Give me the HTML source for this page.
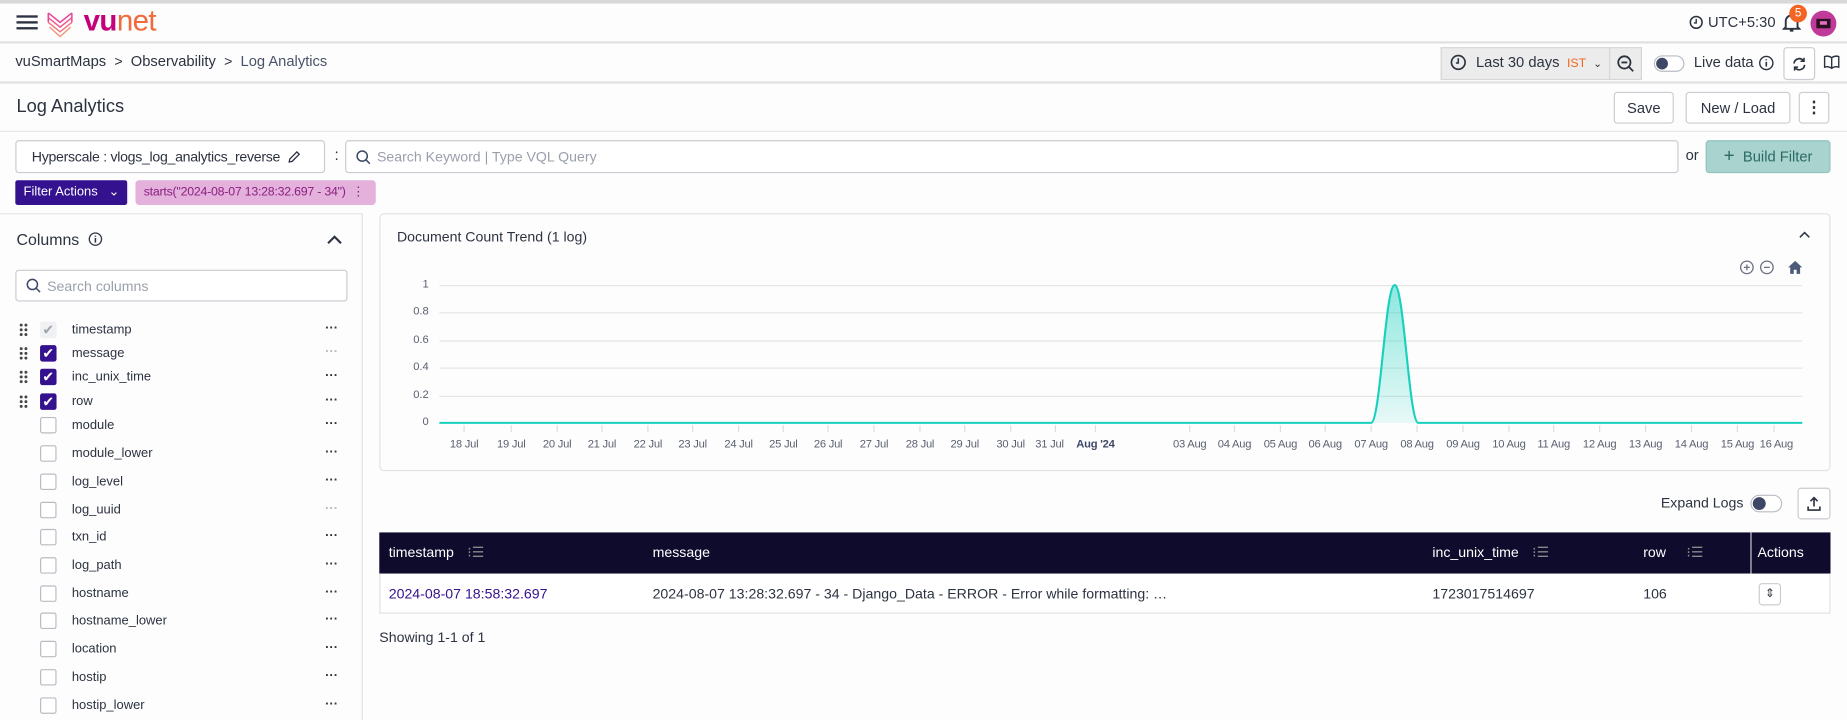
<!DOCTYPE html>
<html><head><meta charset="utf-8"><style>
*{box-sizing:border-box;margin:0;padding:0}
html,body{width:1847px;height:716px;overflow:hidden;background:#fdfdfd}
#s{position:absolute;left:0;top:0;width:1568px;height:608px;transform:scale(1.17793);transform-origin:0 0;font-family:"Liberation Sans",sans-serif;color:#2c3340;font-size:12px;white-space:nowrap}
.a{position:absolute}
.btn{position:absolute;border:1px solid #c9ccd1;border-radius:3px;background:#fff;display:flex;align-items:center;justify-content:center;font-size:12.5px;color:#2c3340;white-space:nowrap}
.cb{position:absolute;left:34px;width:14px;height:14px;border:1px solid #b7bcc4;border-radius:2px;background:#fff}
.cb.on{background:#34118f;border-color:#34118f}
.lbl{position:absolute;left:61px;font-size:11px;color:#2c3340}
.dots{position:absolute;left:276px;font-size:11px;font-weight:bold;color:#333;line-height:6px}
.drag{position:absolute;left:16px;width:8px;height:12px;background:radial-gradient(circle,#444 1.2px,transparent 1.4px) 0 0/4px 4px}
.xl{position:absolute;top:372px;font-size:9.5px;color:#5a6070;transform:translateX(-50%);white-space:nowrap;letter-spacing:-0.2px}
.yl{position:absolute;left:340px;width:24px;text-align:right;font-size:9.5px;color:#5a6070}
.th{position:absolute;top:462px;color:#fff;font-size:12px}
</style></head><body><div id="s">
<div class="a" style="left:0;top:0;width:1568px;height:3px;background:#d8d8d8"></div>
<div class="a" style="left:14px;top:13px;width:18px;height:2px;background:#2c3340;box-shadow:0 5px 0 #2c3340,0 10px 0 #2c3340"></div>
<svg class="a" style="left:40px;top:9px" width="22" height="24" viewBox="0 0 22 24"><g fill="none" stroke-width="1.3"><path d="M1 2 L11 10 L21 2" stroke="#e8479a"/><path d="M1 6 L11 14 L21 6" stroke="#ec5f8f"/><path d="M1 10 L11 18 L21 10" stroke="#f07a86"/><path d="M2 14 L11 22 L20 14" stroke="#f29a80"/><path d="M1 2 V10 M21 2 V10" stroke="#e8479a"/></g></svg>
<div class="a" style="left:71px;top:4px;font-size:25px;font-weight:bold;letter-spacing:-0.5px"><span style="color:#c4007a">vu</span><span style="color:#f06a3c;font-weight:normal">net</span></div>
<svg class="a" style="left:1434px;top:13px" width="12" height="12" viewBox="0 0 12 12"><circle cx="6" cy="6" r="5" fill="none" stroke="#2c3340" stroke-width="1.3"/><path d="M6 3V6.5H4" fill="none" stroke="#2c3340" stroke-width="1.2"/></svg>
<div class="a" style="left:1450px;top:12px;font-size:12.5px">UTC+5:30</div>
<svg class="a" style="left:1513px;top:10px" width="16" height="18" viewBox="0 0 16 18"><path d="M3 13V8a5 5 0 0 1 10 0v5l1.5 1.5h-13z M6.5 16h3" fill="none" stroke="#2c3340" stroke-width="1.6"/></svg>
<div class="a" style="left:1519px;top:4px;width:15px;height:15px;border-radius:50%;background:#f26522;color:#fff;font-size:10px;text-align:center;line-height:15px">5</div>
<div class="a" style="left:1537px;top:9px;width:22px;height:22px;border-radius:50%;background:#c03a9a;overflow:hidden"><div class="a" style="left:5px;top:7px;width:12px;height:8px;background:#2a1020"></div><div class="a" style="left:8px;top:9px;width:6px;height:3px;background:#e070c0"></div></div>
<div class="a" style="left:0;top:35px;width:1568px;height:2px;background:#e2e2e2"></div>
<div class="a" style="left:13px;top:45px;font-size:12.5px;color:#2c3340">vuSmartMaps&nbsp;&nbsp;<span style="font-size:12px">&gt;</span>&nbsp;&nbsp;Observability&nbsp;&nbsp;<span style="font-size:12px">&gt;</span>&nbsp;&nbsp;<span style="color:#4a5468">Log Analytics</span></div>
<div class="a" style="left:1223px;top:40px;width:143px;height:28px;background:#ececec;border:1px solid #d6d6d6;border-right:none"></div>
<div class="a" style="left:1366px;top:40px;width:28px;height:28px;background:#ececec;border:1px solid #d6d6d6"></div>
<svg class="a" style="left:1231px;top:46px" width="14" height="14" viewBox="0 0 14 14"><circle cx="7" cy="7" r="5.8" fill="none" stroke="#2c3340" stroke-width="1.4"/><path d="M7 3.5V7.5H5" fill="none" stroke="#2c3340" stroke-width="1.3"/></svg>
<div class="a" style="left:1253px;top:46px;font-size:12.5px">Last 30 days <span style="color:#f26522;font-size:10.5px">&nbsp;IST</span> <span style="font-size:9px">&nbsp;⌄</span></div>
<svg class="a" style="left:1372px;top:46px" width="16" height="16" viewBox="0 0 16 16"><circle cx="7" cy="7" r="5.2" fill="none" stroke="#2c3340" stroke-width="1.5"/><path d="M4.5 7h5M11 11l3.5 3.5" stroke="#2c3340" stroke-width="1.5"/></svg>
<div class="a" style="left:1404px;top:47px;width:26px;height:14px;border-radius:7px;border:1px solid #b8bcc4;background:#fff"></div>
<div class="a" style="left:1406px;top:49px;width:10px;height:10px;border-radius:50%;background:#3e4866"></div>
<div class="a" style="left:1438px;top:46px;font-size:12.5px">Live data</div>
<svg class="a" style="left:1493px;top:47px" width="13" height="13" viewBox="0 0 13 13"><circle cx="6.5" cy="6.5" r="5.6" fill="none" stroke="#2c3340" stroke-width="1.2"/><path d="M6.5 5.5v4M6.5 3.3v1" stroke="#2c3340" stroke-width="1.4"/></svg>
<div class="btn" style="left:1514px;top:40px;width:27px;height:28px"><svg width="13" height="13" viewBox="0 0 13 13"><path d="M2 6a4.5 4.5 0 0 1 8-2.5M11 7a4.5 4.5 0 0 1-8 2.5" fill="none" stroke="#2c3340" stroke-width="1.4"/><path d="M10.5 1v3h-3M2.5 12V9h3" fill="none" stroke="#2c3340" stroke-width="1.3"/></svg></div>
<svg class="a" style="left:1548px;top:46px" width="14" height="14" viewBox="0 0 14 14"><path d="M7 3C5 1.5 2.5 1.5 1 2v9c1.5-.5 4-.5 6 1 2-1.5 4.5-1.5 6-1V2c-1.5-.5-4-.5-6 1zM7 3v9" fill="none" stroke="#2c3340" stroke-width="1.2"/></svg>
<div class="a" style="left:0;top:69px;width:1568px;height:2px;background:#e2e2e2"></div>
<div class="a" style="left:14px;top:82px;font-size:15.5px;color:#2c3340">Log Analytics</div>
<div class="btn" style="left:1370px;top:78px;width:51px;height:27px">Save</div>
<div class="btn" style="left:1431px;top:78px;width:89px;height:27px">New / Load</div>
<div class="btn" style="left:1527px;top:78px;width:26px;height:27px;font-weight:bold;font-size:14px">⋮</div>
<div class="a" style="left:0;top:111px;width:1568px;height:1px;background:#e6e6e6"></div>
<div class="btn" style="left:13px;top:119px;width:263px;height:28px;justify-content:flex-start;padding-left:13px;font-size:12px;letter-spacing:-0.25px">Hyperscale : vlogs_log_analytics_reverse&nbsp;&nbsp;<svg width="11" height="11" viewBox="0 0 11 11"><path d="M1.5 9.5l.5-2.5 6-6 2 2-6 6z" fill="none" stroke="#2c3340" stroke-width="1.1"/></svg></div>
<div class="a" style="left:284px;top:124px;font-size:13px">:</div>
<div class="btn" style="left:293px;top:119px;width:1132px;height:28px;justify-content:flex-start;padding-left:8px;color:#9aa0ab;font-size:12px"><svg width="13" height="13" viewBox="0 0 13 13" style="margin-right:5px"><circle cx="5.5" cy="5.5" r="4.3" fill="none" stroke="#3e4866" stroke-width="1.3"/><path d="M8.7 8.7L12 12" stroke="#3e4866" stroke-width="1.3"/></svg>Search Keyword | Type VQL Query</div>
<div class="a" style="left:1431px;top:125px;font-size:12.5px">or</div>
<div class="a" style="left:1448px;top:119px;width:106px;height:28px;background:#a9d3ce;border:1px solid #8fc3bd;border-radius:3px;color:#2a6a62;font-size:12.5px;display:flex;align-items:center;justify-content:center"><span style="font-size:16px;margin-right:7px">+</span>Build Filter</div>
<div class="a" style="left:13px;top:153px;width:95px;height:21px;background:#34118f;border-radius:2px;color:#fff;font-size:11px;line-height:21px;padding-left:7px">Filter Actions&nbsp;&nbsp;&nbsp;⌄</div>
<div class="a" style="left:115px;top:153px;width:204px;height:21px;background:#e4b0dc;border-radius:3px;color:#8a2080;font-size:10.5px;line-height:21px;padding-left:7px;letter-spacing:-0.2px">starts("2024-08-07 13:28:32.697 - 34")&nbsp;&nbsp;⋮</div>
<div class="a" style="left:0;top:181px;width:308px;height:430px;border-right:1px solid #e2e2e2;border-top:1px solid #e6e6e6"></div>
<div class="a" style="left:14px;top:196px;font-size:13.5px">Columns</div>
<svg class="a" style="left:75px;top:197px" width="12" height="12" viewBox="0 0 12 12"><circle cx="6" cy="6" r="5.2" fill="none" stroke="#2c3340" stroke-width="1.1"/><path d="M6 5v4M6 3v1" stroke="#2c3340" stroke-width="1.3"/></svg>
<svg class="a" style="left:277px;top:199px" width="14" height="9" viewBox="0 0 14 9"><path d="M1.5 7.5L7 2l5.5 5.5" fill="none" stroke="#2c3340" stroke-width="1.8"/></svg>
<div class="btn" style="left:13px;top:229px;width:282px;height:27px;justify-content:flex-start;padding-left:8px;color:#9aa0ab;font-size:12px"><svg width="13" height="13" viewBox="0 0 13 13" style="margin-right:5px"><circle cx="5.5" cy="5.5" r="4.3" fill="none" stroke="#3e4866" stroke-width="1.3"/><path d="M8.7 8.7L12 12" stroke="#3e4866" stroke-width="1.3"/></svg>Search columns</div>

<div class="drag" style="top:274px"></div><div class="cb" style="top:273px;background:#f0f1f3;border-color:#f0f1f3;color:#a0a5ae;font-size:12px;line-height:12px;text-align:center">✔</div><div class="lbl" style="top:274px">timestamp</div><div class="dots" style="top:276px">···</div>
<div class="drag" style="top:294px"></div><div class="cb on" style="top:293px;color:#fff;font-size:12px;line-height:12px;text-align:center">✔</div><div class="lbl" style="top:294px">message</div><div class="dots" style="top:296px;color:#bbb">···</div>
<div class="drag" style="top:314px"></div><div class="cb on" style="top:313px;color:#fff;font-size:12px;line-height:12px;text-align:center">✔</div><div class="lbl" style="top:314px">inc_unix_time</div><div class="dots" style="top:316px">···</div>
<div class="drag" style="top:335px"></div><div class="cb on" style="top:334px;color:#fff;font-size:12px;line-height:12px;text-align:center">✔</div><div class="lbl" style="top:335px">row</div><div class="dots" style="top:337px">···</div>
<div class="cb" style="top:354px"></div><div class="lbl" style="top:355px">module</div><div class="dots" style="top:357px">···</div>
<div class="cb" style="top:378px"></div><div class="lbl" style="top:379px">module_lower</div><div class="dots" style="top:381px">···</div>
<div class="cb" style="top:402px"></div><div class="lbl" style="top:403px">log_level</div><div class="dots" style="top:405px">···</div>
<div class="cb" style="top:426px"></div><div class="lbl" style="top:427px">log_uuid</div><div class="dots" style="top:429px;color:#bbb">···</div>
<div class="cb" style="top:449px"></div><div class="lbl" style="top:450px">txn_id</div><div class="dots" style="top:452px">···</div>
<div class="cb" style="top:473px"></div><div class="lbl" style="top:474px">log_path</div><div class="dots" style="top:476px">···</div>
<div class="cb" style="top:497px"></div><div class="lbl" style="top:498px">hostname</div><div class="dots" style="top:500px">···</div>
<div class="cb" style="top:520px"></div><div class="lbl" style="top:521px">hostname_lower</div><div class="dots" style="top:523px">···</div>
<div class="cb" style="top:544px"></div><div class="lbl" style="top:545px">location</div><div class="dots" style="top:547px">···</div>
<div class="cb" style="top:568px"></div><div class="lbl" style="top:569px">hostip</div><div class="dots" style="top:571px">···</div>
<div class="cb" style="top:592px"></div><div class="lbl" style="top:593px">hostip_lower</div><div class="dots" style="top:595px">···</div>

<div class="a" style="left:322px;top:181px;width:1232px;height:219px;border:1px solid #e2e2e2;border-radius:4px;background:#fdfdfd"></div>
<div class="a" style="left:337px;top:194px;font-size:12px">Document Count Trend (1 log)</div>
<svg class="a" style="left:1527px;top:196px" width="10" height="7" viewBox="0 0 10 7"><path d="M1 5.5L5 1.5l4 4" fill="none" stroke="#2c3340" stroke-width="1.3"/></svg>
<svg class="a" style="left:1476px;top:220px" width="58" height="14" viewBox="0 0 58 14"><circle cx="7" cy="7" r="5.3" fill="none" stroke="#6a7080" stroke-width="1.1"/><path d="M4.5 7h5M7 4.5v5" stroke="#6a7080" stroke-width="1.1"/><circle cx="24" cy="7" r="5.3" fill="none" stroke="#6a7080" stroke-width="1.1"/><path d="M21.5 7h5" stroke="#6a7080" stroke-width="1.1"/><path d="M42 7l6-5.5 6 5.5h-1.8v5.5h-3v-3.5h-2.4v3.5h-3V7z" fill="#4a5a78"/></svg>
<div class="yl" style="top:236px">1</div><div class="yl" style="top:259px">0.8</div><div class="yl" style="top:283px">0.6</div><div class="yl" style="top:306px">0.4</div><div class="yl" style="top:330px">0.2</div><div class="yl" style="top:353px">0</div>
<svg class="a" style="left:0;top:0" width="1568" height="400">
<g stroke="#e6e6e6" stroke-width="1"><path d="M373 242.5H1530M373 265.5H1530M373 289.5H1530M373 312.5H1530M373 336.5H1530"/></g>
<defs><linearGradient id="g" x1="0" y1="0" x2="0" y2="1"><stop offset="0" stop-color="#1fd1c1" stop-opacity=".5"/><stop offset="1" stop-color="#1fd1c1" stop-opacity=".1"/></linearGradient></defs>
<path d="M1164 359 C1172 358 1176 242 1184 242 C1192 242 1196 358 1204 359 Z" fill="url(#g)"/>
<path d="M373 359H1164 C1172 358 1176 242 1184 242 C1192 242 1196 358 1204 359 H1530" fill="none" stroke="#17d0bd" stroke-width="1.8"/>
<g stroke="#ddd"><path d="M394 361v6M434 361v6M473 361v6M511 361v6M550 361v6M588 361v6M627 361v6M665 361v6M703 361v6M742 361v6M781 361v6M819 361v6M858 361v6M896 361v6M930 361v6M1010 361v6M1048 361v6M1087 361v6M1125 361v6M1164 361v6M1203 361v6M1242 361v6M1281 361v6M1319 361v6M1358 361v6M1397 361v6M1436 361v6M1475 361v6M1506 361v6"/></g>
</svg>
<div class="xl" style="left:394px">18 Jul</div><div class="xl" style="left:434px">19 Jul</div><div class="xl" style="left:473px">20 Jul</div><div class="xl" style="left:511px">21 Jul</div><div class="xl" style="left:550px">22 Jul</div><div class="xl" style="left:588px">23 Jul</div><div class="xl" style="left:627px">24 Jul</div><div class="xl" style="left:665px">25 Jul</div><div class="xl" style="left:703px">26 Jul</div><div class="xl" style="left:742px">27 Jul</div><div class="xl" style="left:781px">28 Jul</div><div class="xl" style="left:819px">29 Jul</div><div class="xl" style="left:858px">30 Jul</div><div class="xl" style="left:891px">31 Jul</div><div class="xl" style="left:930px;font-weight:bold;color:#3e4866">Aug '24</div><div class="xl" style="left:1010px">03 Aug</div><div class="xl" style="left:1048px">04 Aug</div><div class="xl" style="left:1087px">05 Aug</div><div class="xl" style="left:1125px">06 Aug</div><div class="xl" style="left:1164px">07 Aug</div><div class="xl" style="left:1203px">08 Aug</div><div class="xl" style="left:1242px">09 Aug</div><div class="xl" style="left:1281px">10 Aug</div><div class="xl" style="left:1319px">11 Aug</div><div class="xl" style="left:1358px">12 Aug</div><div class="xl" style="left:1397px">13 Aug</div><div class="xl" style="left:1436px">14 Aug</div><div class="xl" style="left:1475px">15 Aug</div><div class="xl" style="left:1508px">16 Aug</div>

<div class="a" style="left:1410px;top:420px;font-size:12px">Expand Logs</div>
<div class="a" style="left:1486px;top:420px;width:27px;height:15px;border-radius:8px;border:1px solid #b8bcc4;background:#fff"></div>
<div class="a" style="left:1488px;top:422px;width:11px;height:11px;border-radius:50%;background:#3e4866"></div>
<div class="btn" style="left:1526px;top:414px;width:28px;height:27px"><svg width="14" height="14" viewBox="0 0 14 14"><path d="M7 9V2M4 4.5L7 1.5l3 3M2 9v3h10V9" fill="none" stroke="#2c3340" stroke-width="1.4"/></svg></div>
<div class="a" style="left:322px;top:452px;width:1232px;height:35px;background:#0e0b2c"></div>
<div class="a" style="left:1486px;top:452px;width:1px;height:69px;background:#ccc"></div>
<div class="th" style="left:330px">timestamp <span style="color:#888;margin-left:8px">⁝☰</span></div>
<div class="th" style="left:554px">message</div>
<div class="th" style="left:1216px">inc_unix_time <span style="color:#888;margin-left:8px">⁝☰</span></div>
<div class="th" style="left:1395px">row <span style="color:#888;margin-left:14px">⁝☰</span></div>
<div class="th" style="left:1492px">Actions</div>
<div class="a" style="left:322px;top:487px;width:1232px;height:34px;border:1px solid #e2e2e2;border-top:none;background:#fff"></div>
<div class="a" style="left:330px;top:497px;font-size:12px;color:#34118f">2024-08-07 18:58:32.697</div>
<div class="a" style="left:554px;top:497px;font-size:12px">2024-08-07 13:28:32.697 - 34 - Django_Data - ERROR - Error while formatting: …</div>
<div class="a" style="left:1216px;top:497px;font-size:12px">1723017514697</div>
<div class="a" style="left:1395px;top:497px;font-size:12px">106</div>
<div class="btn" style="left:1493px;top:495px;width:19px;height:19px;font-size:10px">⇕</div>
<div class="a" style="left:322px;top:534px;font-size:12px">Showing 1-1 of 1</div>
</div></body></html>
